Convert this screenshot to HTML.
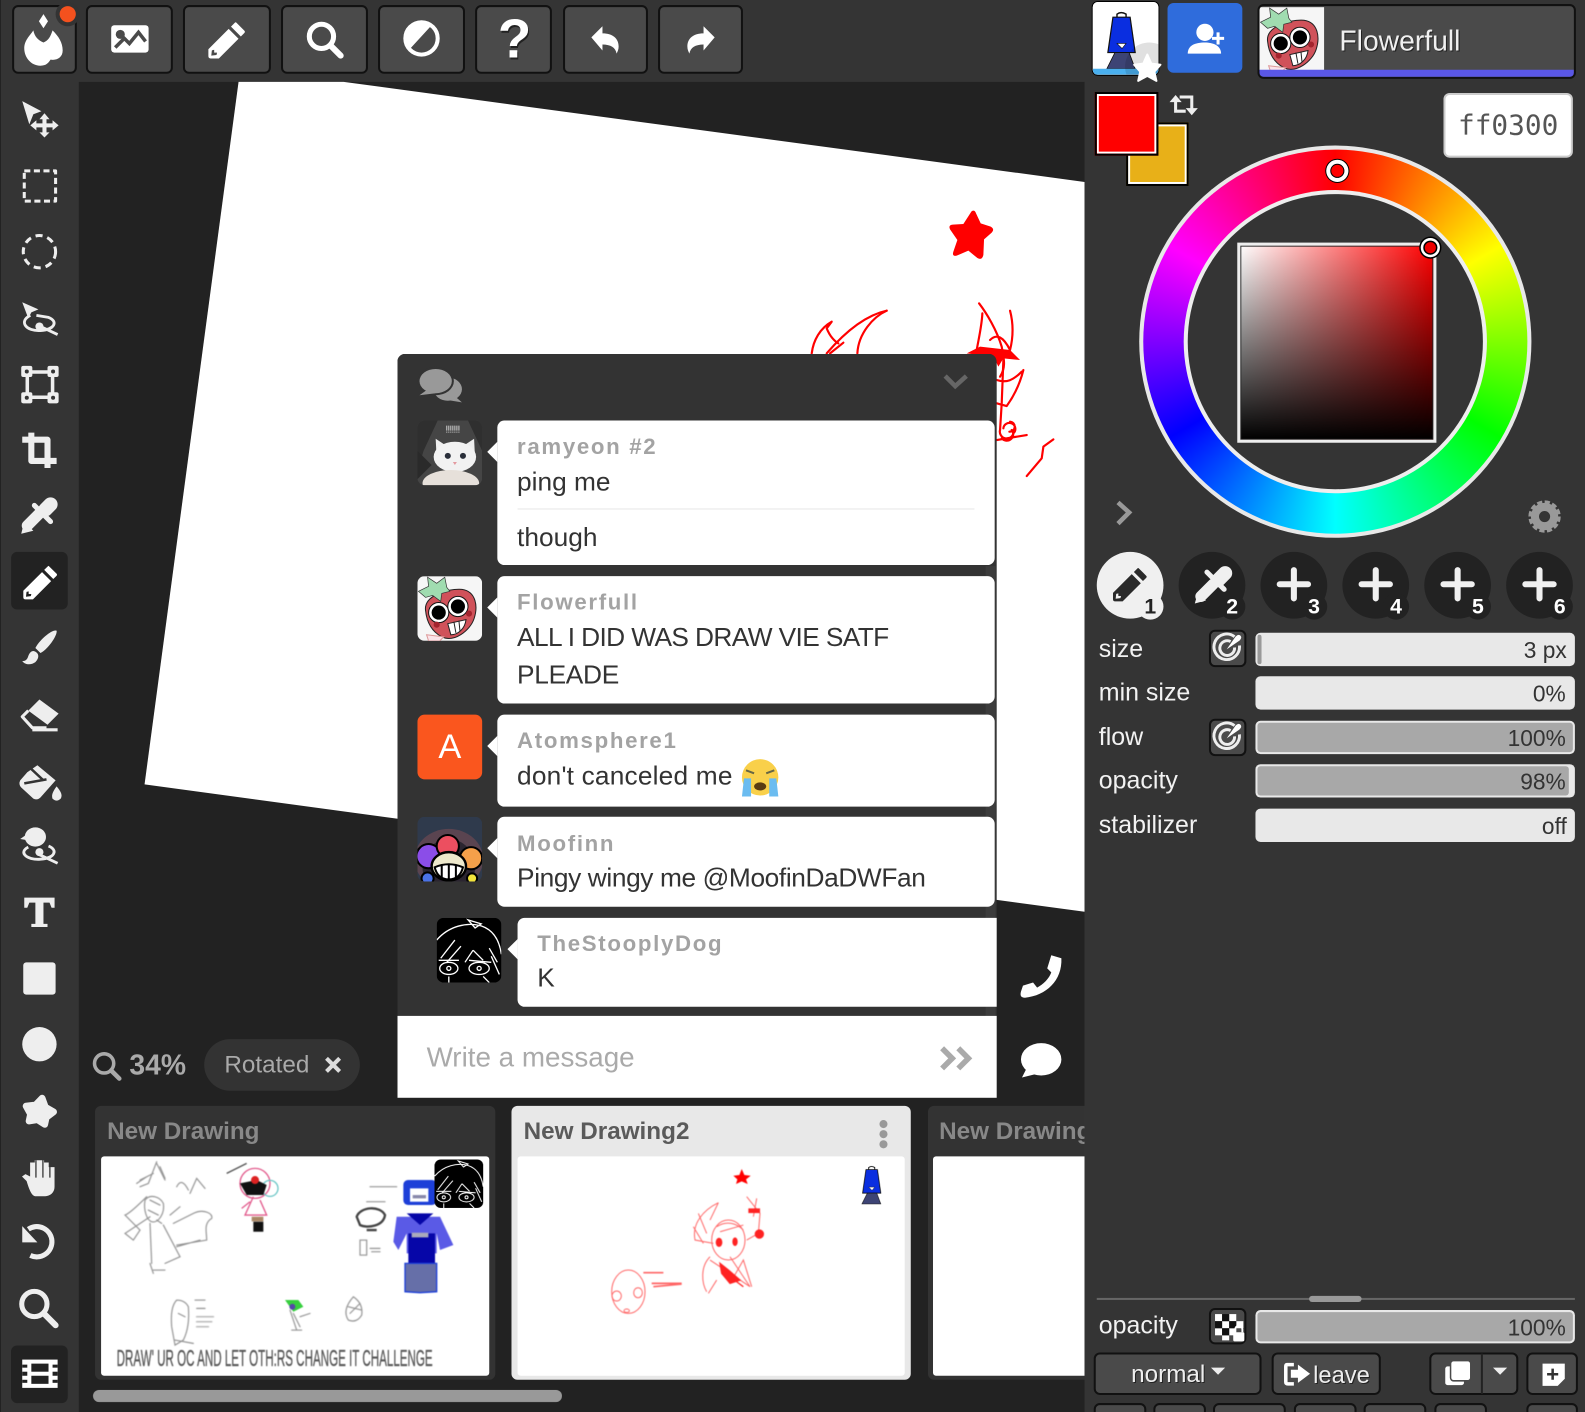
<!DOCTYPE html>
<html><head><meta charset="utf-8"><style>
html,body{margin:0;padding:0;width:1585px;height:1412px;overflow:hidden;background:#343434}
#s{position:absolute;left:0;top:0;width:1568px;height:1397px;transform:scale(1.01084);transform-origin:0 0;font-family:"Liberation Sans",sans-serif;background:#343434;overflow:hidden}
.a{position:absolute}
.btn{position:absolute;background:#4a4a4a;border:2px solid #111;border-radius:6px;box-sizing:border-box}
.bub{position:absolute;background:#fff;border-radius:7px;box-sizing:border-box}
.bub:before{content:"";position:absolute;left:-10px;top:21px;border:10px solid transparent;border-left:0;border-right-color:#fff}
.nm{position:absolute;left:19.5px;top:12px;font-weight:bold;font-size:22px;line-height:28px;letter-spacing:1.65px;color:#a3a3a3;white-space:nowrap}
.tx{position:absolute;left:19.5px;font-size:26px;line-height:38px;color:#333;white-space:nowrap}
.av{position:absolute;width:64px;height:64px;border-radius:7px;overflow:hidden}
.av svg,.ta svg{display:block;width:100%;height:100%}
.lb{position:absolute;left:1087px;font-size:24.7px;line-height:34px;color:#f2f2f2;white-space:nowrap}
.sl{position:absolute;left:1242px;width:316px;height:33px;background:#e8e8e8;border-radius:5px;box-sizing:border-box;overflow:hidden}
.sl span{position:absolute;right:8px;top:0;font-size:22.5px;line-height:35px;color:#333}
.sl i{position:absolute;left:2px;top:2px;bottom:2px;background:#a8a8a8;border-radius:3px}
.th{position:absolute;top:1094px;height:271px;background:#333;border-radius:6px;overflow:hidden}
.th b{position:absolute;left:12px;top:10px;font-size:24px;line-height:32px;color:#888;white-space:nowrap}
.th u{position:absolute;left:6px;top:50px;height:217px;background:#fff;border-radius:3px;display:block}
.ta{position:absolute;width:48px;height:48px;border-radius:6px;overflow:hidden}
svg.ov{position:absolute;left:0;top:0;width:1568px;height:1397px;pointer-events:none}
</style></head><body><div id="s">

<svg width="0" height="0" style="position:absolute"><defs>
<symbol id="berry" viewBox="0 0 64 64">
<rect width="64" height="64" fill="#f6f6f6"/>
<path d="M8 34C6 20 28 12 44 13C58 15 60 30 56 42C52 54 36 66 24 60C13 54 9 44 8 34Z" fill="#d0525a" stroke="#222"/>
<path d="M1 15L11 10L10 1L19 7L27 1L29 11L32 15L24 17L23 25L15 19L8 21Z" fill="#a0dcb0" stroke="#333" stroke-width=".7"/>
<circle cx="21" cy="36" r="10" fill="#fff" stroke="#111"/><circle cx="21" cy="36" r="7" fill="#000"/>
<circle cx="40" cy="30" r="10" fill="#fff" stroke="#111"/><circle cx="40" cy="30" r="7" fill="#000"/>
<path d="M30 47L48 43C47 52 40 58 33 58Z" fill="#fff" stroke="#222"/>
<path d="M36 45L38 56M41 44L42 54" stroke="#222"/>
<path d="M9 58L26 60L22 64H11Z" fill="#fbe4ea" stroke="#d99"/>
<circle cx="51" cy="37" r="3" fill="#a3242e"/><circle cx="19" cy="48" r="3" fill="#a3242e"/>
</symbol>
<symbol id="bag" viewBox="0 0 65 72">
<rect width="65" height="72" fill="#fff"/>
<path d="M24 16V12Q28 9 33 12V16" fill="none" stroke="#111" stroke-width="1.4"/>
<path d="M20 15L37 15L42 50L15 50Z" fill="#0a2ee0" stroke="#111" stroke-width="1.2"/>
<path d="M24 41H33L29 46Z" fill="#fff" stroke="#111" stroke-width=".6"/>
<path d="M22 50H36L42 66H14Z" fill="#3d4475" stroke="#111" stroke-width=".8"/>
</symbol>
<symbol id="cat" viewBox="0 0 64 64">
<rect width="64" height="64" fill="#454545"/>
<path d="M0 0H20L6 30L0 50ZM50 0H64V30Z" fill="#2f2f2f"/>
<path d="M0 30L14 44L0 58Z" fill="#2a2a2a"/>
<path d="M19 38L18 18L27 24Q37 21 47 24L56 18L57 38Z" fill="#eee"/>
<ellipse cx="37" cy="36" rx="21" ry="15" fill="#f2f2f2"/>
<ellipse cx="33" cy="62" rx="28" ry="13" fill="#e6e0da"/>
<circle cx="30" cy="35" r="3" fill="#2a2f3a"/><circle cx="45" cy="35" r="3" fill="#2a2f3a"/>
<path d="M35 41H39L37 44Z" fill="#e49aa0"/>
<path d="M29 5V12M31 5V12M33 5V12M35 5V12M37 5V12M39 5V12M41 5V12" stroke="#ddd" stroke-width=".9" stroke-dasharray="5 1"/>
</symbol>
<symbol id="moo" viewBox="0 0 64 64">
<rect width="64" height="64" fill="#2f3a4c"/>
<ellipse cx="31" cy="42" rx="34" ry="30" fill="#5a4450"/>
<ellipse cx="31" cy="50" rx="26" ry="28" fill="#2b2530"/>
<circle cx="10" cy="61" r="6" fill="#4a72e6" stroke="#000" stroke-width="2"/>
<circle cx="54" cy="61" r="5" fill="#f2e33c" stroke="#000" stroke-width="2"/>
<circle cx="11" cy="39" r="12" fill="#8b4de8" stroke="#000" stroke-width="2"/>
<circle cx="53" cy="41" r="11" fill="#f5a04a" stroke="#000" stroke-width="2"/>
<circle cx="30" cy="29" r="11" fill="#ec4f60" stroke="#000" stroke-width="2"/>
<ellipse cx="31" cy="49" rx="17" ry="14" fill="#eee9cc" stroke="#000" stroke-width="2.4"/>
<path d="M17 50Q31 44 45 50Q42 62 31 62Q20 62 17 50Z" fill="#fff" stroke="#000" stroke-width="2"/>
<path d="M24 48V60M31 47V62M38 48V60" stroke="#000" stroke-width="2"/>
</symbol>
<symbol id="dog" viewBox="0 0 64 64">
<rect width="64" height="64" fill="#000"/>
<g fill="none" stroke="#fff" stroke-width="1.3">
<path d="M0 22C12 8 30 4 44 8C56 12 62 22 64 36"/>
<path d="M31 2L44 6L38 10Z"/>
<path d="M4 40L18 22M10 44L24 28M36 32L28 44M36 32L46 42M52 30L60 44"/>
<ellipse cx="12" cy="50" rx="9" ry="6"/><ellipse cx="42" cy="50" rx="10" ry="6"/>
<path d="M2 42H22M32 42L54 44M12 58V64M46 58L52 64M54 38L62 56"/>
<circle cx="12" cy="50" r="2"/><circle cx="42" cy="50" r="2"/>
</g>
</symbol>
<symbol id="pencil" viewBox="0 0 34 34">
<path d="M25 2L32 9Q33 10 32 11L29 14L20.5 5.5L24 2Q24.500 1.500 25 2Z"/>
<path fill-rule="evenodd" d="M18.500 7.500L27 16L10 33H3Q1 33 1 31V25ZM4 26L3.500 30.500L8 30L8.500 28L6 28L6 25.500Z"/>
</symbol>
<symbol id="target" viewBox="0 0 36 36">
<g fill="none" stroke="#eee" stroke-width="3"><path d="M25 6A13 13 0 1 0 30 15"/><path d="M21 11A7.5 7.5 0 1 0 25 17"/></g>
<path d="M17 19L26 6Q29 3 31 5Q33 7 30 10Z" fill="#fff"/>
</symbol>
</defs></svg>

<!-- canvas area -->
<div class="a" style="left:78px;top:81px;width:995px;height:1316px;background:#222;overflow:hidden"></div>
<svg class="ov">
<polygon points="236,81 340,81 1073,180 1073,902 143,776" fill="#fff"/>
<g transform="scale(.98932) translate(780,190) scale(.33333)">
<path d="M580 62Q585 62 588 70L602 100L632 110Q645 118 635 128L612 148L610 195Q606 212 592 204L565 182L530 197Q515 200 520 185L532 150L510 118Q504 105 518 104L550 102L572 68Q575 62 580 62Z" fill="#f00"/>
<g fill="none" stroke="#f00" stroke-width="6.500" stroke-linecap="round" stroke-linejoin="round">
<path d="M95 490C100 450 120 415 155 395L140 415C150 440 165 455 175 460"/>
<path d="M320 362C260 375 200 420 140 490M190 458L150 490"/>
<path d="M320 362C280 380 235 430 232 490"/>
<path d="M597 340C620 370 650 420 665 470C670 500 680 530 660 560"/>
<path d="M607 370C605 410 595 450 590 480"/>
<path d="M690 362C700 400 700 440 690 480C670 440 650 430 630 450"/>
<path d="M670 510L665 640L660 720M730 540C720 580 700 620 680 648L650 640M650 570C680 580 700 570 725 545"/>
<path d="M660 720A20 20 0 1 0 700 730A18 18 0 1 0 670 715M650 750L740 735M690 695a15 15 0 1 1 -2 30M665 745a16 16 0 1 0 30 -25"/>
<path d="M820 748L790 770L785 805L740 858"/>
</g>
<path d="M560 490L600 470L690 480L720 510L670 505L655 530L640 500Z" fill="#f00"/>
</g>
</svg>

<!-- zoom status -->
<div class="a" style="left:128px;top:1036px;font-weight:bold;font-size:28px;line-height:36px;color:#aaa">34%</div>
<div class="a" style="left:202px;top:1028px;width:154px;height:51px;background:#333;border-radius:26px"></div>
<div class="a" style="left:222px;top:1036px;font-size:24px;line-height:36px;color:#aaa">Rotated</div>

<!-- thumbnails -->
<div class="a" style="left:78px;top:1090px;width:995px;height:307px;overflow:hidden">
<div class="th" style="left:16px;top:4px;width:396px"><b>New Drawing</b><u style="width:384px"></u></div>
<div class="th" style="left:428px;top:4px;width:395px;background:#e8e8e8"><b style="color:#5a5a5a">New Drawing2</b><u style="width:383px"></u></div>
<div class="th" style="left:840px;top:4px;width:190px"><b style="left:11px">New Drawing</b><u style="width:190px;left:5px"></u></div>
</div>
<svg class="ov" style="filter:blur(.5px)">
<g transform="scale(.98932) translate(90,1100) scale(.33333)">
<g fill="none" stroke="#777" stroke-width="3.500" stroke-linecap="round" opacity=".8">
<path d="M200 185L175 250L150 260M200 190L225 240M170 290C150 310 120 340 105 345L150 390L130 420L105 400L180 350"/>
<path d="M165 300C180 280 210 290 220 310C225 340 205 370 185 365C170 360 160 330 165 300Z"/>
<path d="M180 370L185 490M220 375L270 470L225 490M190 510H225M180 490L190 520M140 250L170 230M150 240L190 220M210 200L225 235"/>
<path d="M260 260Q275 230 295 270M300 280L320 235L345 265M250 370L310 340C340 325 370 340 365 355C340 370 350 395 350 420L260 435M240 345L270 320M260 440L330 420"/>
<path d="M180 300L210 315M175 330L205 345M200 360L215 370"/>
<path d="M260 600Q285 600 295 620Q300 680 280 720L255 735L245 680Q240 620 260 600ZM315 600H345M320 625H345M255 720L310 730M265 640L285 650"/>
<path d="M320 650H370M320 665H365M320 680H355" stroke-width="5" opacity=".6"/>
<path d="M600 630L620 690M605 690H635M630 650L660 640M610 640L630 680"/>
<path d="M790 590Q820 610 815 645Q800 670 775 660Q755 630 790 590ZM775 620L815 630M780 640L810 610"/>
<path d="M810 420H830V465H810ZM840 445H870M845 455H870"/>
<path d="M840 260H920M830 305H885"/>
</g>
<path d="M800 350C810 320 870 315 885 345C880 380 830 385 810 375ZM830 390H860" fill="none" stroke="#444" stroke-width="7"/>
<g fill="none" stroke-width="4"><circle cx="495" cy="250" r="45" stroke="#e25a8c"/><circle cx="540" cy="265" r="24" stroke="#6cc6c6"/><path d="M490 290L465 345L530 345L510 300M480 305L455 325" stroke="#e25a8c"/><path d="M410 220L470 190" stroke="#555"/></g>
<path d="M450 250L500 240L530 255L520 285H470Z" fill="#111"/><rect x="490" y="365" width="30" height="30" fill="#111"/><circle cx="495" cy="240" r="12" fill="#d22"/><rect x="485" y="350" width="35" height="14" fill="#a86"/>
<rect x="940" y="240" width="100" height="75" rx="14" fill="#1d3fd8"/><rect x="960" y="265" width="55" height="40" fill="#fff"/><rect x="968" y="285" width="40" height="10" fill="#88a"/>
<path d="M920 350H1050L1090 435L1050 450L1040 400V460H950V400L925 450L910 425Z" fill="#5a5ae6"/>
<rect x="955" y="400" width="80" height="90" fill="#0606a8"/><path d="M950 340H1030L990 375Z" fill="#0606a8"/><rect x="965" y="398" width="50" height="14" fill="#aab"/>
<path d="M945 490H1040L1040 575L990 578L945 575Z" fill="#666fa8" stroke="#1d3fd8" stroke-width="4"/>
<path d="M585 600L625 600L640 620L610 635Z" fill="#37cf3e"/><circle cx="607" cy="620" r="9" fill="#5546a8"/>
<text x="80" y="798" font-family="Liberation Sans,sans-serif" font-size="68" fill="#555" stroke="#555" stroke-width="1" textLength="948" lengthAdjust="spacingAndGlyphs">DRAW' UR OC  AND LET OTH:RS CHANGE IT CHALLENGE</text>
</g>
<g transform="scale(.98932) translate(510,1100) scale(.33333)">
<path d="M695 207L703 225L722 227L708 238L713 252L695 244L678 252L682 238L670 227L688 225Z" fill="#f00"/>
<g fill="none" stroke="#f33" stroke-width="3" opacity=".75">
<ellipse cx="355" cy="575" rx="50" ry="65"/><ellipse cx="320" cy="588" rx="14" ry="15"/><ellipse cx="384" cy="578" rx="13" ry="15"/><ellipse cx="350" cy="632" rx="8" ry="5"/>
<path d="M400 518H460M425 550H515M430 560L515 552" stroke-width="5"/>
<path d="M625 308C580 330 545 370 555 420L610 430M600 360L625 308M550 380L580 430M565 340L590 400"/>
<ellipse cx="655" cy="420" rx="50" ry="60"/>
<path d="M620 380C650 360 680 370 700 390M630 395L700 375"/>
<path d="M710 290L750 340L745 400L710 420M740 295L730 350M600 470C570 500 575 550 590 575M600 480L720 560M660 470L720 560M620 540L595 580M660 550L700 480L725 560"/>
</g>
<g fill="#f22"><ellipse cx="627" cy="427" rx="10" ry="14"/><ellipse cx="675" cy="425" rx="8" ry="13"/><rect x="715" y="325" width="35" height="14"/><circle cx="748" cy="402" r="14"/></g>
<path d="M630 490L655 510L690 540L660 550L635 520ZM660 530L700 560" fill="#f22" stroke="#f22" stroke-width="4"/>
</g>
</svg>
<div class="ta" style="left:430px;top:1147px"><svg><use href="#dog"/></svg></div>
<div class="ta" style="left:841px;top:1147px;background:#fff"><svg viewBox="0 0 65 72"><use href="#bag"/></svg></div>
<div class="a" style="left:92px;top:1375px;width:464px;height:12px;background:#999;border-radius:6px"></div>

<!-- chat panel -->
<div class="a" style="left:393px;top:350px;width:593px;height:736px;background:#333;border-radius:8px 8px 0 0;overflow:hidden">
<div class="a" style="left:582px;top:210px;width:10px;height:560px;background:#3c3c3c"></div>
</div>
<div class="av" style="left:413px;top:416px"><svg viewBox="0 0 64 64"><use href="#cat"/></svg></div>
<div class="bub" style="left:492px;top:416px;width:492px;height:143px"><div class="nm">ramyeon #2</div><div class="tx" style="top:41px">ping me</div><div class="a" style="left:20px;top:87px;width:452px;height:1px;background:#e6e6e6"></div><div class="tx" style="top:96px">though</div></div>
<div class="av" style="left:413px;top:570px"><svg viewBox="0 0 64 64"><use href="#berry"/></svg></div>
<div class="bub" style="left:492px;top:570px;width:492px;height:126px"><div class="nm">Flowerfull</div><div class="tx" style="top:41px;letter-spacing:-.6px">ALL I DID WAS DRAW VIE SATF</div><div class="tx" style="top:78px;letter-spacing:-.3px">PLEADE</div></div>
<div class="av" style="left:413px;top:707px;background:#fa561e;color:#fff;text-align:center;font-size:34px;line-height:64px">A</div>
<div class="bub" style="left:492px;top:707px;width:492px;height:91px"><div class="nm">Atomsphere1</div><div class="tx" style="top:41px;letter-spacing:.18px">don't canceled me</div></div>
<div class="av" style="left:413px;top:808px"><svg viewBox="0 0 64 64"><use href="#moo"/></svg></div>
<div class="bub" style="left:492px;top:808px;width:492px;height:89px"><div class="nm" style="top:13px">Moofinn</div><div class="tx" style="top:41px;letter-spacing:-.38px">Pingy wingy me @MoofinDaDWFan</div></div>
<div class="av" style="left:432px;top:908px"><svg viewBox="0 0 64 64"><use href="#dog"/></svg></div>
<div class="bub" style="left:512px;top:908px;width:474px;height:88px;border-radius:7px 0 0 7px"><div class="nm">TheStooplyDog</div><div class="tx" style="top:40px">K</div></div>
<div class="a" style="left:393px;top:1005px;width:593px;height:81px;background:#fff"></div>
<div class="a" style="left:422px;top:1024px;font-size:27.5px;line-height:44px;color:#aaa;white-space:nowrap">Write a message</div>

<!-- right panel -->
<div class="a" style="left:1073px;top:0;width:495px;height:1397px;background:#343434"></div>
<div class="a" style="left:1081px;top:2px;width:65px;height:72px;border-radius:5px;overflow:hidden;background:#fff;box-shadow:0 0 0 1px #000">
<svg width="65" height="72" viewBox="0 0 65 72" style="display:block"><use href="#bag"/><rect y="66" width="65" height="6" fill="#4ab0ef"/><circle cx="56" cy="64" r="24" fill="#000" opacity=".12"/></svg></div>
<div class="a" style="left:1155px;top:3px;width:74px;height:69px;background:#2f6cdc;border-radius:6px"></div>
<div class="btn" style="left:1244px;top:4px;width:315px;height:74px;overflow:hidden;background:#4a4a4a">
<div class="a" style="left:0;top:1px;width:64px;height:64px"><svg width="64" height="64" viewBox="0 0 64 64" style="display:block"><use href="#berry"/></svg></div>
<div class="a" style="left:0;bottom:0;width:100%;height:7px;background:#5a57e6"></div></div>
<div class="a" style="left:1325px;top:22px;font-size:28px;line-height:38px;color:#f0f0f0;text-shadow:1px 1px 0 #222">Flowerfull</div>
<div class="a" style="left:1114px;top:121px;width:62px;height:63px;box-sizing:border-box;background:#e8b018;border:2px solid #000;box-shadow:inset 0 0 0 2px #fff"></div>
<div class="a" style="left:1083px;top:91px;width:63px;height:63px;box-sizing:border-box;background:#f00;border:2px solid #000;box-shadow:inset 0 0 0 2px #fff"></div>
<div class="a" style="left:1428px;top:92px;width:128px;height:64px;box-sizing:border-box;background:#fff;border:2px solid #ccc;border-radius:6px;text-align:center;font-family:'DejaVu Sans Mono','Liberation Mono',monospace;font-size:27.5px;line-height:60px;color:#555">ff0300</div>

<!-- wheel -->
<div class="a" style="left:1127px;top:144px;width:388px;height:388px;border-radius:50%;background:#e8e8e8"></div>
<div class="a" style="left:1131px;top:148px;width:380px;height:380px;border-radius:50%;background:conic-gradient(#f00,#ff0,#0f0,#0ff,#00f,#f0f,#f00)"></div>
<div class="a" style="left:1171px;top:188px;width:300px;height:300px;border-radius:50%;background:#eee"></div>
<div class="a" style="left:1175px;top:192px;width:292px;height:292px;border-radius:50%;background:#343434"></div>
<div class="a" style="left:1224px;top:240px;width:197px;height:198px;box-sizing:border-box;background:linear-gradient(to top,#000,rgba(0,0,0,0)),linear-gradient(to right,#fff,#f00);border:3px solid #eee;box-shadow:inset 0 0 0 1px #222"></div>

<!-- sliders -->
<div class="lb" style="top:626px">size</div><div class="lb" style="top:669px">min size</div><div class="lb" style="top:713px">flow</div><div class="lb" style="top:756px">opacity</div><div class="lb" style="top:800px">stabilizer</div>
<div class="sl" style="top:626px"><i style="width:4px;background:#999"></i><span>3 px</span></div>
<div class="sl" style="top:669px"><span style="right:9px">0%</span></div>
<div class="sl" style="top:713px"><i style="right:2px"></i><span style="right:9px">100%</span></div>
<div class="sl" style="top:756px"><i style="width:308px"></i><span style="right:9px">98%</span></div>
<div class="sl" style="top:800px"><span>off</span></div>
<div class="btn" style="left:1196px;top:623px;width:37px;height:37px"></div>
<div class="btn" style="left:1196px;top:711px;width:37px;height:37px"></div>

<div class="a" style="left:1085px;top:1284px;width:473px;height:2px;background:#666"></div>
<div class="a" style="left:1295px;top:1282px;width:52px;height:6px;background:#999;border-radius:3px"></div>
<div class="lb" style="top:1295px">opacity</div>
<div class="sl" style="top:1296px"><i style="right:2px"></i><span style="right:9px">100%</span></div>
<div class="btn" style="left:1196px;top:1294px;width:37px;height:36px"></div>

<div class="btn" style="left:1082px;top:1338px;width:166px;height:42px"></div>
<div class="a" style="left:1119px;top:1340px;font-size:24px;line-height:40px;color:#eee;text-shadow:1px 1px 0 #222">normal</div>
<div class="btn" style="left:1258px;top:1338px;width:108px;height:42px"></div>
<div class="a" style="left:1299px;top:1340px;font-size:23.500px;line-height:40px;color:#eee;text-shadow:1px 1px 0 #222">leave</div>
<div class="btn" style="left:1414px;top:1338px;width:88px;height:42px"></div>
<div class="a" style="left:1465px;top:1339px;width:2px;height:40px;background:#222"></div>
<div class="btn" style="left:1510px;top:1338px;width:51px;height:42px"></div>
<div class="btn" style="left:1082px;top:1388px;width:52px;height:30px"></div>
<div class="btn" style="left:1141px;top:1388px;width:52px;height:30px"></div>
<div class="btn" style="left:1200px;top:1388px;width:72px;height:30px"></div>
<div class="btn" style="left:1280px;top:1388px;width:62px;height:30px"></div>
<div class="btn" style="left:1349px;top:1388px;width:62px;height:30px"></div>
<div class="btn" style="left:1419px;top:1388px;width:52px;height:30px"></div>
<div class="btn" style="left:1510px;top:1388px;width:51px;height:30px"></div>

<!-- top toolbar buttons -->
<div class="btn" style="left:12px;top:5px;width:64px;height:68px"></div>
<div class="btn" style="left:85px;top:5px;width:86px;height:68px"></div>
<div class="btn" style="left:181px;top:5px;width:87px;height:68px"></div>
<div class="btn" style="left:278px;top:5px;width:86px;height:68px"></div>
<div class="btn" style="left:374px;top:5px;width:86px;height:68px"></div>
<div class="btn" style="left:470px;top:5px;width:76px;height:68px"></div>
<div class="btn" style="left:557px;top:5px;width:84px;height:68px"></div>
<div class="btn" style="left:651px;top:5px;width:84px;height:68px"></div>
<div class="a" style="left:471px;top:9px;width:76px;text-align:center;font-weight:bold;font-size:54px;line-height:60px;color:#fff;text-shadow:1px 2px 0 #222">?</div>

<!-- left toolbar -->
<div class="a" style="left:0;top:0;width:1px;height:1397px;background:#222"></div>
<div class="a" style="left:11px;top:546px;width:56px;height:57px;background:#222;border-radius:6px"></div>
<div class="a" style="left:11px;top:1331px;width:56px;height:57px;background:#222;border-radius:6px"></div>

<!-- icons -->
<svg class="ov">
<!-- top bar -->
<g fill="#fff">
<path d="M43 14L47.5 21L43 28L38.5 21Z"/>
<path d="M33 30C34 36 38 40 43 42C48 40 50 36 52 30C58 36 62 42 62 50C62 57 56 60 50 59C48 62 46 65 40 65C30 65 24 56 24 48C24 40 29 36 33 30Z"/>
<rect x="110" y="25" width="37" height="27" rx="3"/>
<use href="#pencil" x="205" y="20" width="39" height="39" fill="#fff"/>
<path d="M585 37L596 26V33C606 33 612 38 612 46C612 49 611 51 610 53C609 47 604 44 596 44V50Z"/>
<path d="M707 37L696 26V33C686 33 680 38 680 46C680 49 681 51 682 53C683 47 688 44 696 44V50Z"/>
</g>
<circle cx="67" cy="14" r="12" fill="#333"/><circle cx="67" cy="14" r="8" fill="#f4511e"/>
<circle cx="119" cy="34" r="4.500" fill="#4a4a4a"/>
<path d="M114 47L123 38L128 43L137 32L144 41" fill="none" stroke="#4a4a4a" stroke-width="3.500"/>
<g fill="none" stroke="#fff"><circle cx="318" cy="36" r="12" stroke-width="5"/><path d="M327 45L337 55" stroke-width="6" stroke-linecap="round"/><circle cx="417" cy="38" r="16" stroke-width="4"/></g>
<path d="M427 25L405 49A16 16 0 0 1 427 25Z" fill="#fff"/>

<!-- add-user, swap -->
<g fill="#fff">
<circle cx="1192" cy="32" r="8.500"/>
<path d="M1175 53C1175 45 1182 42 1192 42C1200 42 1208 45 1208 53Z"/>
</g>
<path d="M1205 32V44M1199 38H1211" stroke="#fff" stroke-width="3"/>
<g fill="none" stroke="#eee" stroke-width="3">
<path d="M1163 99V110H1173M1167 96H1179V108"/></g>
<path d="M1157 101L1163 94L1169 101ZM1173 107L1179 114L1185 107Z" fill="#eee"/>
<path d="M1135 54L1139 63L1148 64L1142 71L1144 80L1135 75L1126 80L1128 71L1122 64L1131 63Z" fill="#fff" stroke="#fff" stroke-width="2" stroke-linejoin="round"/>

<!-- wheel markers -->
<circle cx="1323" cy="169" r="12" fill="#000"/><circle cx="1323" cy="169" r="11" fill="#fff"/><circle cx="1323" cy="169" r="7" fill="#000"/><circle cx="1323" cy="169" r="6" fill="#f00"/>
<circle cx="1415" cy="245" r="11" fill="#000"/><circle cx="1415" cy="245" r="9.500" fill="#fff"/><circle cx="1415" cy="245" r="7" fill="#000"/><circle cx="1415" cy="245" r="5.500" fill="#e00"/>
<path d="M1106 497L1117 507L1106 518" fill="none" stroke="#999" stroke-width="4.500"/>
<circle cx="1528" cy="511" r="9.500" fill="none" stroke="#999" stroke-width="8"/>
<circle cx="1528" cy="511" r="14" fill="none" stroke="#999" stroke-width="4" stroke-dasharray="5 2.330"/>

<!-- brush slots -->
<circle cx="1118" cy="579" r="33" fill="#f0f0f0"/><circle cx="1138" cy="600" r="13" fill="#f0f0f0"/>
<g fill="#222"><circle cx="1199" cy="579" r="33"/><circle cx="1219" cy="600" r="13"/><circle cx="1280" cy="579" r="33"/><circle cx="1300" cy="600" r="13"/><circle cx="1361" cy="579" r="33"/><circle cx="1381" cy="600" r="13"/><circle cx="1442" cy="579" r="33"/><circle cx="1462" cy="600" r="13"/><circle cx="1523" cy="579" r="33"/><circle cx="1543" cy="600" r="13"/></g>
<use href="#pencil" x="1100" y="560" width="36" height="36" fill="#2a2a2a"/>
<g stroke="#f0f0f0" stroke-linecap="round">
<path d="M1188 590L1200 578" stroke-width="11"/><path d="M1194 566L1211 583" stroke-width="5"/><path d="M1205 574L1212 567" stroke-width="14"/>
<g stroke-width="6"><path d="M1280 564V592M1266 578H1294M1361 564V592M1347 578H1375M1442 564V592M1428 578H1456M1523 564V592M1509 578H1537"/></g>
</g>
<path d="M1182 597L1185 586L1193 594Z" fill="#f0f0f0"/>
<g font-family="Liberation Sans,sans-serif" font-weight="bold" font-size="21" text-anchor="middle" fill="#fff">
<text x="1138" y="607" fill="#222">1</text><text x="1219" y="607">2</text><text x="1300" y="607">3</text><text x="1381" y="607">4</text><text x="1462" y="607">5</text><text x="1543" y="607">6</text>
</g>
<use href="#target" x="1197" y="624" width="35" height="35"/>
<use href="#target" x="1197" y="712" width="35" height="35"/>

<!-- checker -->
<g fill="#fff"><rect x="1202" y="1300" width="7" height="7"/><rect x="1216" y="1300" width="7" height="7"/><rect x="1209" y="1307" width="7" height="7"/><rect x="1223" y="1307" width="7" height="7"/><rect x="1202" y="1314" width="7" height="7"/><rect x="1216" y="1314" width="7" height="7"/><rect x="1209" y="1321" width="7" height="5"/></g>
<g fill="#111"><rect x="1209" y="1300" width="7" height="7"/><rect x="1202" y="1307" width="7" height="7"/><rect x="1216" y="1307" width="7" height="7"/><rect x="1209" y="1314" width="7" height="7"/></g>
<rect x="1220" y="1318" width="11" height="9" rx="1.500" fill="#fff"/><path d="M1222 1318V1315A3.500 3.500 0 0 1 1229 1315V1318" fill="none" stroke="#fff" stroke-width="1.800"/>

<!-- bottom buttons -->
<path d="M1198 1353H1212L1205 1360Z" fill="#eee"/>
<path d="M1280 1350H1273Q1272 1350 1272 1352V1367Q1272 1369 1274 1369H1280" fill="none" stroke="#fff" stroke-width="3.500"/>
<path d="M1277 1355H1284V1350L1296 1359L1284 1368V1363H1277Z" fill="#fff"/>
<rect x="1429" y="1351" width="20" height="20" rx="3" fill="#fff" stroke="#4a4a4a" stroke-width="1.500"/>
<rect x="1435" y="1346" width="20" height="20" rx="3" fill="#fff" stroke="#4a4a4a" stroke-width="1.500"/>
<path d="M1477 1353H1491L1484 1360Z" fill="#eee"/>
<path d="M1526 1349H1548V1364L1541 1371H1526Z" fill="#fff"/>
<path d="M1536 1354V1365M1530.500 1359.500H1541.500" stroke="#333" stroke-width="2.500"/>

<!-- chat icons -->
<ellipse cx="443" cy="385" rx="14" ry="11.500" fill="#999"/><path d="M450 392L457 398L444 396Z" fill="#999"/>
<ellipse cx="431" cy="377" rx="18" ry="14" fill="#333"/>
<ellipse cx="431" cy="377" rx="16" ry="12" fill="#999"/><path d="M422 386L415 391L431 389Z" fill="#999"/>
<path d="M935 372L945 382L956 372" fill="none" stroke="#666" stroke-width="4.500"/>
<path d="M932 1037L942 1047L932 1057M948 1037L958 1047L948 1057" fill="none" stroke="#aaa" stroke-width="5.500"/>
<path d="M1040 945L1050 948C1051 970 1035 985 1014 987C1010 987 1009 985 1010 981L1012 975L1022 972L1026 977C1032 974 1038 968 1040 962L1036 958Z" fill="#fff"/>
<ellipse cx="1030" cy="1048" rx="20" ry="16" fill="#fff"/><path d="M1016 1056L1011 1066L1027 1062Z" fill="#fff"/>

<!-- emoji -->
<circle cx="752" cy="769" r="18" fill="#f9d04a"/>
<path d="M738 762L746 765M766 762L758 765" stroke="#664" stroke-width="2"/>
<ellipse cx="752" cy="778" rx="6" ry="4" fill="#5a3c12"/>
<path d="M736 770H743V788H734ZM761 770H768L770 788H761Z" fill="#6bbcf0"/>

<!-- status -->
<g fill="none" stroke="#aaa"><circle cx="103" cy="1052" r="9.500" stroke-width="3.500"/><path d="M110 1059L118 1067" stroke-width="4.500" stroke-linecap="round"/></g>
<path d="M323 1047L336 1060M336 1047L323 1060" stroke="#ddd" stroke-width="4"/>
<g fill="#999"><circle cx="874" cy="1112" r="4"/><circle cx="874" cy="1122" r="4"/><circle cx="874" cy="1132" r="4"/></g>

<!-- left tools -->
<g fill="#eee">
<path d="M22 100L41 110L33 113L29 123Z"/>
<path d="M44 112L49 118H46V122H52V119L58 124L52 129V126H46V131H49L44 136L39 131H42V126H36V129L30 124L36 119V122H42V118H39Z"/>
<path d="M22 299L38 306L31 309L28 315Z"/>
<circle cx="39" cy="323" r="4"/>
<ellipse cx="35" cy="828" rx="10.500" ry="9.500"/><path d="M26 831L20 830L27 825Z"/>
<circle cx="39" cy="843" r="4"/>
<use href="#pencil" x="22" y="558" width="36" height="36" fill="#fff"/>
<path d="M56 624C57 628 48 642 40 646L35 641C39 633 52 622 56 624Z"/>
<path d="M33 644C38 645 40 650 35 655C31 658 25 658 22 654C26 654 27 652 28 649C29 646 31 644 33 644Z"/>
<path d="M39 692L58 706L47 717L28 703Z"/>
<path d="M27 764L37 757L55 772L40 789Q37 792 33 790L21 779Q18 776 20 772Z"/>
<path d="M56 778Q63 786 60 790Q56 794 52 790Q50 786 56 778Z"/>
<path d="M24 888H54V898H51L49 893H43V914H47V917H31V914H35V893H29L27 898H24Z"/>
<rect x="23" y="952" width="32" height="32" rx="3"/>
<ellipse cx="39" cy="1033" rx="17" ry="17"/>
<path transform="rotate(12 39 1099)" d="M39 1086L44 1094L53 1097L47 1104L47 1111L39 1108L31 1111L31 1104L25 1097L34 1094Z" stroke="#eee" stroke-width="6.500" stroke-linejoin="round"/>
<g transform="translate(39 1165) scale(1.150) translate(-39 -1165)">
<path d="M28 1168L24 1164L27 1162L31 1164V1152H35V1150H39V1150H43V1152H47V1156H52V1173C52 1178 48 1181 44 1181H36C33 1181 31 1178 28 1168Z"/>
<path d="M36 1165V1150M42 1165V1149M48 1165V1152" stroke="#343434" stroke-width="1.100"/>
</g>
<path d="M22 1213V1229H37Z"/>
</g>
<g fill="none" stroke="#eee" stroke-linejoin="round">
<path d="M30 312C18 318 26 328 40 327C54 326 58 318 48 314L36 312M38 322L57 331" stroke-width="2.800"/>
<path d="M28 838C18 843 26 851 40 850C54 849 58 841 48 837M38 845L57 854" stroke-width="2.800"/>
<rect x="24" y="169" width="31" height="30" stroke-width="3" stroke-dasharray="6 3.500"/>
<circle cx="39" cy="249" r="16" stroke-width="3" stroke-dasharray="7 4.900"/>
<rect x="27" y="368" width="25" height="25" stroke-width="3.500"/>
<path d="M22 435H47V463M31 428V456H56" stroke-width="6"/>
<path d="M28 703L22 709L32 720H46M32 722H57" stroke-width="3"/>
<path d="M28 1216A15 15 0 1 1 30 1242" stroke-width="5"/>
<circle cx="34" cy="1290" r="12.500" stroke-width="5"/>
</g>
<path d="M44 1300L55 1311" stroke="#eee" stroke-width="6" stroke-linecap="round"/>
<g fill="#eee"><rect x="21" y="362" width="11" height="11" rx="2"/><rect x="47" y="362" width="11" height="11" rx="2"/><rect x="21" y="388" width="11" height="11" rx="2"/><rect x="47" y="388" width="11" height="11" rx="2"/></g>
<g fill="#343434"><circle cx="26.500" cy="367.500" r="2"/><circle cx="52.500" cy="367.500" r="2"/><circle cx="26.500" cy="393.500" r="2"/><circle cx="52.500" cy="393.500" r="2"/></g>
<g stroke="#eee" stroke-linecap="round">
<path d="M27 520L41 506" stroke-width="11"/><path d="M34 500L50 516" stroke-width="5"/><path d="M45 504L50 499" stroke-width="14"/>
</g>
<path d="M21 528L24 516L33 525Z" fill="#eee"/>
<path d="M28 758L43 772" stroke="#343434" stroke-width="2.500"/>
<path d="M24 775L46 771" stroke="#343434" stroke-width="2.500"/>
<rect x="22" y="1345" width="35" height="28" fill="#fff"/>
<g fill="#222"><rect x="31" y="1349" width="17" height="8"/><rect x="31" y="1361" width="17" height="8"/>
<rect x="22" y="1350" width="5" height="3"/><rect x="22" y="1357" width="5" height="4"/><rect x="22" y="1365" width="5" height="3"/>
<rect x="52" y="1350" width="5" height="3"/><rect x="52" y="1357" width="5" height="4"/><rect x="52" y="1365" width="5" height="3"/></g>
</svg>

</div></body></html>
